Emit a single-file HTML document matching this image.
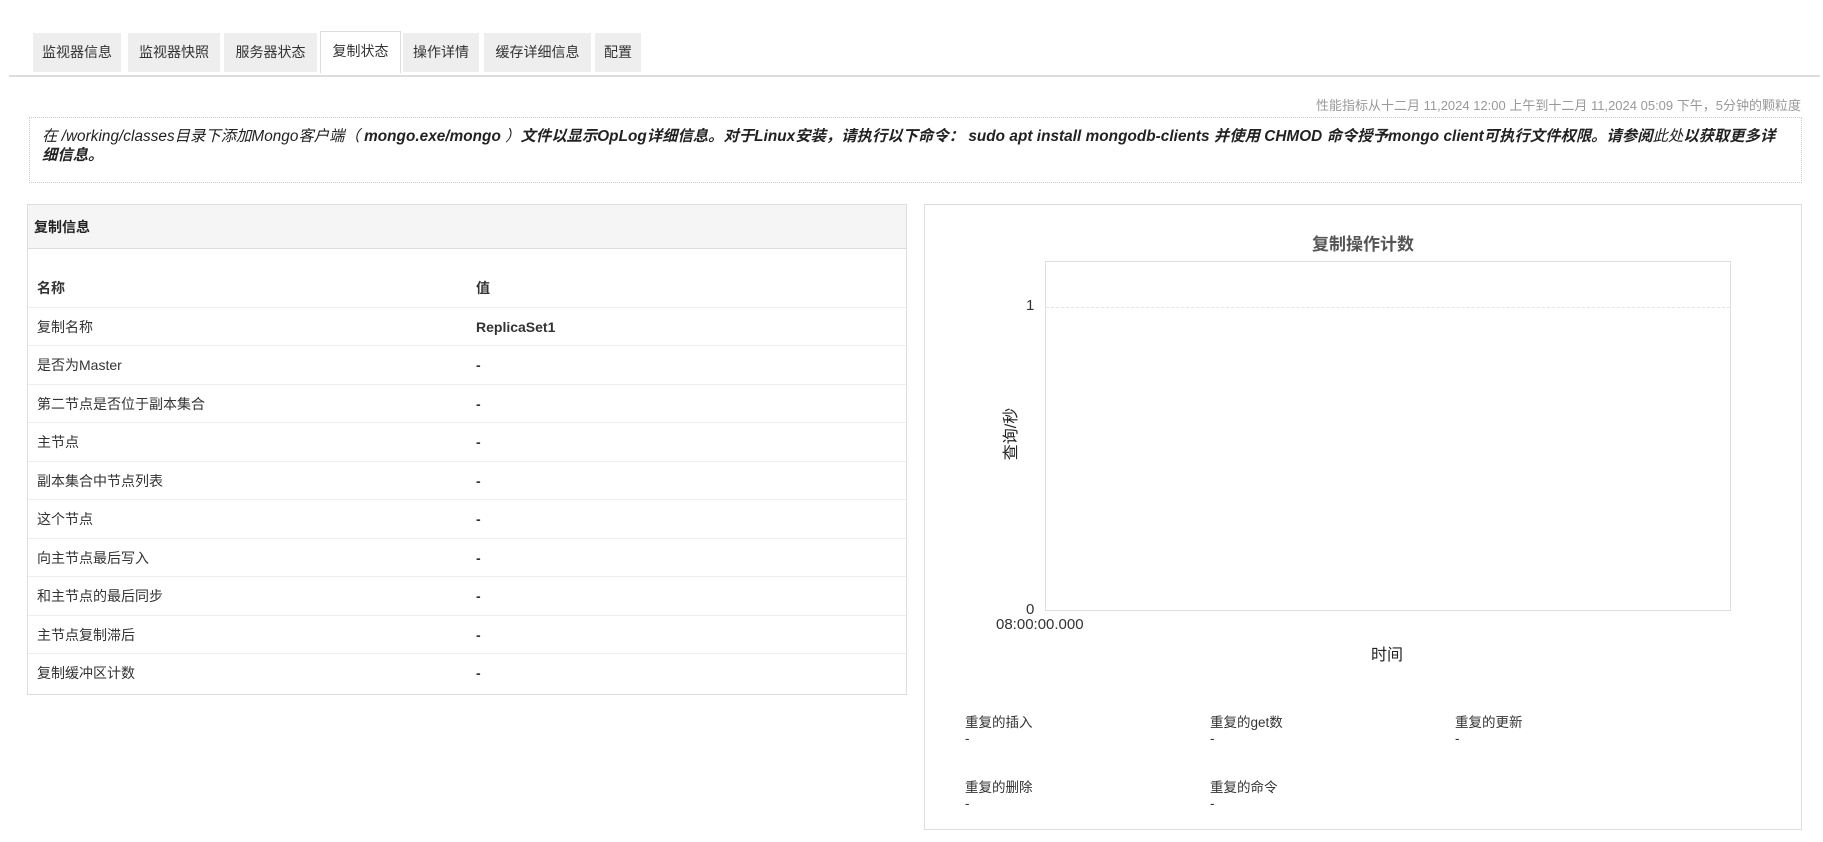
<!DOCTYPE html>
<html><head><meta charset="utf-8">
<style>
*{margin:0;padding:0;box-sizing:border-box}
body{width:1823px;height:842px;background:#fff;font-family:"Liberation Sans","Noto Sans CJK SC",sans-serif;color:#333;position:relative;overflow:hidden;font-size:14px}
.a{position:absolute}
.tab{position:absolute;top:33px;height:39px;background:#eee;font-size:14px;line-height:39px;text-align:center;color:#333}
.tab.on{background:#fff;border:1px solid #ddd;border-bottom:none;height:42px;top:31px}
.bar{position:absolute;left:9px;top:75px;width:1811px;height:2px;background:#ddd}
.note{position:absolute;left:29px;top:117px;width:1773px;height:66px;border:1px dotted #ccc;padding:9px 12px;font-style:italic;font-size:15.3px;letter-spacing:0.05px;line-height:19px;color:#222}
.panel{position:absolute;border:1px solid #ddd}
.row{position:absolute;left:0;width:100%;height:38px;border-top:1px solid #eee;font-size:14px;line-height:38px}
.row span{position:absolute}
.st{position:absolute;font-size:13.5px;color:#333}
</style></head><body>
<div class="tab" style="left:33px;width:88px">监视器信息</div>
<div class="tab" style="left:128px;width:92px">监视器快照</div>
<div class="tab" style="left:224px;width:93px">服务器状态</div>
<div class="tab on" style="left:320px;width:81px">复制状态</div>
<div class="tab" style="left:403px;width:76px">操作详情</div>
<div class="tab" style="left:484px;width:107px">缓存详细信息</div>
<div class="tab" style="left:595px;width:46px">配置</div>
<div class="bar"></div>
<div class="a" style="right:22px;top:95px;font-size:13px;color:#999">性能指标从十二月 11,2024 12:00 上午到十二月 11,2024 05:09 下午，5分钟的颗粒度</div>
<div class="note">在 /working/classes目录下添加Mongo客户端（ <b>mongo.exe/mongo</b> ）<b>文件以显示OpLog详细信息。对于Linux安装，请执行以下命令： sudo apt install mongodb-clients 并使用 CHMOD 命令授予mongo client可执行文件权限。请参阅</b>此处<b>以获取更多详细信息。</b></div>

<div class="panel" style="left:27px;top:204px;width:880px;height:491px">
<div style="height:44px;background:#f5f5f5;border-bottom:1px solid #ddd;font-weight:bold;font-size:14px;line-height:44px;padding-left:6px;color:#222">复制信息</div>
<div class="row" style="top:64px;border-top:none;font-weight:bold"><span style="left:9px">名称</span><span style="left:448px">值</span></div>
<div class="row" style="top:102px"><span style="left:9px">复制名称</span><span style="left:448px;font-weight:bold">ReplicaSet1</span></div>
<div class="row" style="top:140px"><span style="left:9px">是否为Master</span><span style="left:448px;font-weight:bold">-</span></div>
<div class="row" style="top:179px"><span style="left:9px">第二节点是否位于副本集合</span><span style="left:448px;font-weight:bold">-</span></div>
<div class="row" style="top:217px"><span style="left:9px">主节点</span><span style="left:448px;font-weight:bold">-</span></div>
<div class="row" style="top:256px"><span style="left:9px">副本集合中节点列表</span><span style="left:448px;font-weight:bold">-</span></div>
<div class="row" style="top:294px"><span style="left:9px">这个节点</span><span style="left:448px;font-weight:bold">-</span></div>
<div class="row" style="top:333px"><span style="left:9px">向主节点最后写入</span><span style="left:448px;font-weight:bold">-</span></div>
<div class="row" style="top:371px"><span style="left:9px">和主节点的最后同步</span><span style="left:448px;font-weight:bold">-</span></div>
<div class="row" style="top:410px"><span style="left:9px">主节点复制滞后</span><span style="left:448px;font-weight:bold">-</span></div>
<div class="row" style="top:448px"><span style="left:9px">复制缓冲区计数</span><span style="left:448px;font-weight:bold">-</span></div>
</div>

<div class="panel" style="left:924px;top:204px;width:878px;height:626px"></div>
<div class="a" style="left:1263px;width:200px;text-align:center;top:230px;font-size:17px;font-weight:bold;color:#555">复制操作计数</div>
<div class="a" style="left:1045px;top:261px;width:686px;height:350px;border:1px solid #ddd"></div>
<div class="a" style="left:1046px;top:307px;width:684px;border-top:1px dashed #e5e5e5"></div>
<div class="a" style="left:1026px;top:297px;font-size:15px">1</div>
<div class="a" style="left:1026px;top:601px;font-size:15px">0</div>
<div class="a" style="left:996px;top:616px;font-size:15px">08:00:00.000</div>
<div class="a" style="left:983px;top:422px;font-size:16px;color:#222;transform:rotate(-90deg)">查询/秒</div>
<div class="a" style="left:1371px;top:641px;font-size:16px;color:#222">时间</div>

<div class="st" style="left:965px;top:711px">重复的插入</div><div class="st" style="left:965px;top:731px">-</div>
<div class="st" style="left:1210px;top:711px">重复的get数</div><div class="st" style="left:1210px;top:731px">-</div>
<div class="st" style="left:1455px;top:711px">重复的更新</div><div class="st" style="left:1455px;top:731px">-</div>
<div class="st" style="left:965px;top:776px">重复的删除</div><div class="st" style="left:965px;top:796px">-</div>
<div class="st" style="left:1210px;top:776px">重复的命令</div><div class="st" style="left:1210px;top:796px">-</div>
</body></html>
